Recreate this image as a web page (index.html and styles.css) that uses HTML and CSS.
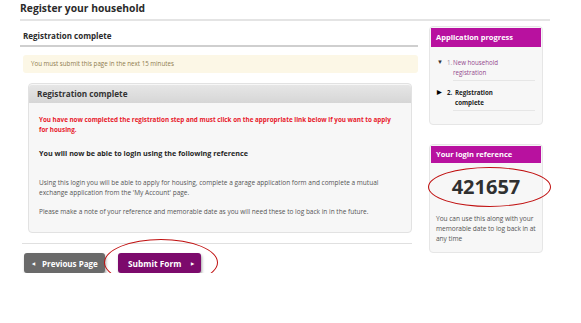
FILE: index.html
```html
<!DOCTYPE html>
<html>
<head>
<meta charset="utf-8">
<link rel="stylesheet" href="styles.css">
</head>
<body>
<div class="page">
  <h1 class="title">Register your household</h1>
  <div class="content">
    <div class="main">
      <h2 class="section-title">Registration complete</h2>
      <div class="notice">You must submit this page in the next 15 minutes</div>
      <div class="panel">
        <div class="panel-head">Registration complete</div>
        <div class="panel-body">
          <p class="warn">You have now completed the registration step and must click on the appropriate link below if you want to apply for housing.</p>
          <p class="strong">You will now be able to login using the following reference</p>
          <p class="info">Using this login you will be able to apply for housing, complete a garage application form and complete a mutual exchange application from the 'My Account' page.</p>
          <p class="info">Please make a note of your reference and memorable date as you will need these to log back in in the future.</p>
        </div>
      </div>
      <div class="actions">
        <button class="btn btn-prev"><span class="arr">&#9664;</span>Previous Page</button>
        <div class="submit-wrap">
          <button class="btn btn-submit">Submit Form<span class="arr arr-r">&#9654;</span></button>
          <span class="ring ring-submit"></span>
        </div>
      </div>
    </div>
    <div class="side">
      <div class="box">
        <div class="box-head">Application progress</div>
        <ul class="steps">
          <li class="step done"><span class="tri">&#9660;</span><span class="num">1.</span><span class="lbl">New household registration</span></li>
          <li class="step current"><span class="tri">&#9654;</span><span class="num">2.</span><span class="lbl">Registration complete</span></li>
        </ul>
      </div>
      <div class="box box-ref">
        <div class="box-head">Your login reference</div>
        <div class="ref-wrap">
          <div class="ref">421657</div>
          <span class="ring ring-ref"></span>
        </div>
        <p class="ref-note">You can use this along with your memorable date to log back in at any time</p>
      </div>
    </div>
  </div>
</div>
</body>
</html>
```
FILE: styles.css
```css
html, body {
  margin: 0;
  padding: 0;
  background: #ffffff;
}
body {
  font-family: "Open Sans", "Noto Sans", "Liberation Sans", sans-serif;
  color: #333333;
}
.page {
  width: 530px;
  padding-left: 20px;
}
.title {
  margin: 0;
  padding-top: 1px;
  height: 18px;
  font-size: 10.3px;
  font-weight: 700;
  color: #2b2b2b;
  line-height: 14px;
  border-bottom: 2px solid #e4e4e4;
}
.content {
  display: flex;
  gap: 11px;
}
.main {
  width: 398px;
}
.section-title {
  margin: 8px 0 0 0;
  padding-left: 3px;
  height: 16px;
  font-size: 8px;
  font-weight: 700;
  line-height: 14px;
  color: #2b2b2b;
  border-bottom: 2px solid #cfcfcf;
}
.notice {
  margin: 8px 0 0 3px;
  height: 18px;
  padding-left: 8px;
  background: #fcf7e6;
  border-radius: 3px;
  font-size: 6.2px;
  line-height: 18px;
  color: #8f7b4e;
}
.panel {
  margin: 10px 6px 0 8px;
  height: 148px;
  background: #f7f7f7;
  border: 1px solid #e2e2e2;
  border-radius: 4px;
}
.panel-head {
  height: 18px;
  margin: 1px 0 0 0;
  padding-left: 8px;
  background: linear-gradient(#e6e6e6, #d6d6d6);
  font-size: 8.2px;
  font-weight: 700;
  line-height: 18px;
  color: #333;
  border-radius: 3px 3px 0 0;
}
.panel-body {
  padding: 12px 14px 0 10px;
}
.panel-body p {
  margin: 0;
}
.warn {
  color: #e8192c;
  font-weight: 700;
  font-size: 6.3px;
  line-height: 10px;
}
.strong {
  margin-top: 13px !important;
  font-weight: 700;
  font-size: 7.2px;
  line-height: 10px;
  color: #262626;
}
.info {
  font-size: 6.5px;
  line-height: 10px;
  color: #555;
  padding-right: 6px;
}
.strong + .info {
  margin-top: 20px !important;
}
.info + .info {
  margin-top: 9px !important;
}
.actions {
  margin: 10px 6px 0 2px;
  border-top: 1px solid #e0e0e0;
  padding: 9px 0 0 2px;
  display: flex;
  gap: 13px;
  align-items: flex-start;
}
.btn {
  height: 20px;
  border: none;
  border-radius: 3px;
  font-family: "Open Sans", "Noto Sans", "Liberation Sans", sans-serif;
  font-size: 8px;
  font-weight: 700;
  color: #ffffff;
  padding: 0;
  display: flex;
  align-items: center;
  box-shadow: 1px 2px 3px rgba(0,0,0,0.35);
}
.btn-prev {
  width: 81px;
  background: #6a6a6a;
  padding-left: 8px;
}
.btn-submit {
  width: 83px;
  background: #7c0a6c;
  padding-left: 10px;
  font-size: 8.3px;
}
.arr {
  font-size: 4px;
  margin-right: 7px;
}
.arr-r {
  margin: 0 0 0 10px;
}
.submit-wrap {
  position: relative;
}
.ring {
  position: absolute;
  border: 1.5px solid #c01010;
  border-radius: 50%;
  pointer-events: none;
}
.ring-submit {
  left: -14px;
  top: -14px;
  width: 112px;
  height: 45px;
}
.side {
  width: 114px;
  padding-top: 5px;
}
.box {
  background: #f7f7f7;
  border: 1px solid #e6e6e6;
  border-radius: 4px;
  padding: 1px 1px 0 1px;
}
.box-head {
  height: 19px;
  background: #b8119f;
  color: #ffffff;
  font-size: 7.5px;
  font-weight: 700;
  line-height: 19px;
  padding-left: 5px;
}
.steps {
  list-style: none;
  margin: 0;
  padding: 11px 5px 13px 6px;
}
.step {
  display: flex;
  font-size: 6.2px;
  line-height: 9.5px;
  padding-bottom: 4px;
  position: relative;
}
.step + .step {
  margin-top: 7px;
}
.step::after {
  content: "";
  position: absolute;
  left: 16px;
  right: 1px;
  bottom: 0;
  border-bottom: 1px solid #e6e6e6;
}
.tri {
  width: 10px;
  font-size: 6px;
  color: #333;
}
.num {
  width: 6px;
  color: #a08a9d;
}
.done .lbl {
  color: #93478c;
  width: 60px;
}
.current {
  font-weight: 700;
  color: #222;
}
.current .tri {
  color: #000;
}
.current .num {
  color: #222;
  width: 8px;
}
.current .lbl {
  width: 60px;
}
.box-ref {
  margin-top: 19px;
  padding-bottom: 8px;
}
.box-ref .box-head {
  height: 17px;
  line-height: 17px;
}
.ref-wrap {
  position: relative;
  height: 48px;
}
.ref {
  text-align: center;
  font-size: 20px;
  font-weight: 700;
  line-height: 48px;
  color: #303030;
}
.ring-ref {
  left: -3px;
  top: 4px;
  width: 121px;
  height: 38px;
}
.ref-note {
  margin: 3px 0 0 0;
  padding: 0 0 0 5px;
  font-size: 6.6px;
  letter-spacing: -0.05px;
  line-height: 10px;
  color: #555;
}
```
